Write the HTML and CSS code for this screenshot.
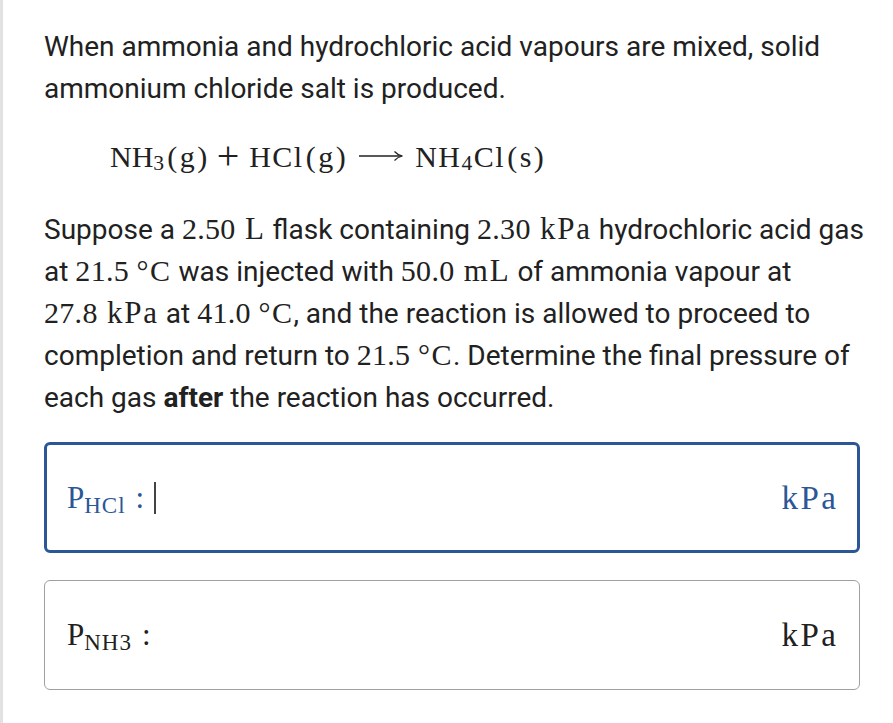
FILE: index.html
```html
<!DOCTYPE html>
<html>
<head>
<meta charset="utf-8">
<link rel="stylesheet" href="styles.css">
</head>
<body>
<div class="page">
  <div class="content">
    <p class="para intro">When ammonia and hydrochloric acid vapours are mixed, solid<br>ammonium chloride salt is produced.</p>
    <div class="equation">
      <span class="m">NH<sub>3</sub></span><span class="m par p1">(g)</span><span class="m op">+</span><span class="m wide">HCl</span><span class="m par p2">(g)</span><span class="arrow"><svg width="44" height="14" viewBox="0 0 44 14"><path d="M0 7 H42.5" stroke="#222" stroke-width="1.3" fill="none"/><path d="M35.5 2.5 Q38.5 6 43.5 7 Q38.5 8 35.5 11.5" stroke="#222" stroke-width="1.2" fill="none"/></svg></span><span class="m wide">NH<sub>4</sub>Cl</span><span class="m par p3">(s)</span>
    </div>
    <p class="para question">Suppose a <span class="m">2.50<span class="u">L</span></span> flask containing <span class="m">2.30<span class="u">kPa</span></span> hydrochloric acid gas<br>at <span class="m">21.5<span class="deg">°C</span></span> was injected with <span class="m">50.0<span class="u">mL</span></span> of ammonia vapour at<br><span class="m">27.8<span class="u">kPa</span></span> at <span class="m">41.0<span class="deg">°C</span></span>, and the reaction is allowed to proceed to<br>completion and return to <span class="m">21.5<span class="deg">°C</span></span>. Determine the final pressure of<br>each gas <b>after</b> the reaction has occurred.</p>
    <div class="answers">
      <div class="field active">
        <span class="label">P<sub>HCl</sub></span><span class="colon">:</span><span class="cursor"></span>
        <span class="unit">kPa</span>
      </div>
      <div class="field">
        <span class="label">P<sub>NH3</sub></span><span class="colon">:</span>
        <span class="unit">kPa</span>
      </div>
    </div>
  </div>
</div>
</body>
</html>
```

FILE: styles.css
```css
html, body {
  margin: 0;
  padding: 0;
  background: #fff;
}
.page {
  min-height: 723px;
  border-left: 3px solid #e2e2e2;
  box-sizing: border-box;
}
.content {
  width: 816px;
  padding: 26px 0 0 41px;
  font-family: Roboto, "Liberation Sans", sans-serif;
  font-size: 28px;
  line-height: 42px;
  color: #212121;
}
.para {
  margin: 0;
  white-space: nowrap;
}
.m {
  font-family: "Liberation Serif", serif;
  font-size: 30px;
  line-height: 1;
  letter-spacing: 0.3px;
}
.m .u {
  margin-left: 0.3em;
  letter-spacing: 1.8px;
  font-size: 31px;
}
.m .deg {
  margin-left: 0.25em;
  letter-spacing: 1.5px;
}
.m sub {
  font-size: 0.72em;
  vertical-align: -0.15em;
  line-height: 0;
}
.equation {
  margin: 26px 0 31px 66px;
  height: 42px;
  display: flex;
  align-items: center;
  color: #212121;
}
.equation .m {
  font-size: 30px;
  letter-spacing: 0;
}
.equation .par {
  letter-spacing: 2.5px;
}
.equation .wide {
  letter-spacing: 1.5px;
}
.equation .p1 {
  margin-left: 3px;
}
.equation .op {
  font-size: 40px;
  margin: 0 10px 0 7px;
  padding-bottom: 3px;
}
.equation .p2 {
  margin-left: 2px;
}
.equation .p3 {
  margin-left: 2px;
}
.equation .arrow {
  display: flex;
  margin: 0 12px 0 11px;
  padding-bottom: 2px;
}
b {
  font-weight: 700;
}
.answers {
  margin-top: 23px;
  display: flex;
  flex-direction: column;
  gap: 27px;
}
.field {
  height: 110px;
  box-sizing: border-box;
  border: 1.5px solid #a0a0a0;
  border-radius: 6px;
  display: flex;
  align-items: center;
  padding: 0 23px 0 22px;
  color: #212121;
  font-family: "Liberation Serif", serif;
  font-size: 31px;
}
.field.active {
  height: 111px;
  border: 3px solid #2b5797;
  padding: 0 21px 0 20px;
  color: #2b5797;
}
.label sub {
  font-family: "Liberation Serif", serif;
  font-size: 23px;
  letter-spacing: 1px;
  vertical-align: -0.2em;
  line-height: 0;
}
.colon {
  margin-left: 10px;
}
.cursor {
  width: 2px;
  height: 32px;
  background: #444;
  margin-left: 10px;
}
.unit {
  margin-left: auto;
  font-size: 33px;
  letter-spacing: 2.5px;
  margin-right: -2.5px;
}
```
